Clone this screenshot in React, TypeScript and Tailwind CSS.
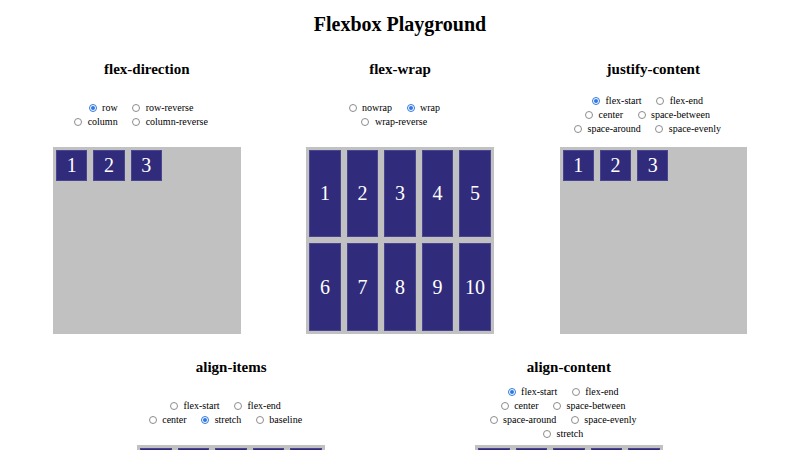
import { useState } from "react";

type Opt = { value: string; cls: string };

function Radio({ checked }: { checked: boolean }) {
  return checked ? (
    <span className="ml-[1.5px] flex h-[8px] w-[8px] shrink-0 items-center justify-center rounded-full border border-[#2f78e4] bg-white">
      <span className="h-[4px] w-[4px] rounded-full bg-[#2f78e4]" />
    </span>
  ) : (
    <span className="ml-[1.5px] h-[8px] w-[8px] shrink-0 rounded-full border border-[#8d8d8d] bg-white" />
  );
}

function Options({
  rows,
  value,
  onChange,
}: {
  rows: Opt[][];
  value: string;
  onChange: (v: string) => void;
}) {
  return (
    <div className="mt-[9px] flex h-[56px] w-full flex-col justify-center">
      {rows.map((row, i) => (
        <div key={i} className="flex justify-center leading-[14px]">
          {row.map((o) => (
            <label
              key={o.value}
              className="mr-[13px] flex cursor-pointer items-center gap-[5.5px] text-[10px] text-black"
              onClick={() => onChange(o.value)}
            >
              <Radio checked={value === o.value} />
              <span>{o.value}</span>
            </label>
          ))}
        </div>
      ))}
    </div>
  );
}

function Item({ n, className }: { n: number; className: string }) {
  return (
    <div
      className={`m-[3px] flex shrink-0 items-center justify-center border border-[#4a4590] bg-[#312b7b] text-[20px] leading-[23px] text-white ${className}`}
    >
      {n}
    </div>
  );
}

function Section({
  title,
  rows,
  value,
  onChange,
  boxClass,
  children,
}: {
  title: string;
  rows: Opt[][];
  value: string;
  onChange: (v: string) => void;
  boxClass: string;
  children: React.ReactNode;
}) {
  return (
    <section className="flex w-[213px] flex-col items-center pt-[25px]">
      <h2 className="text-[15px] font-bold leading-[17px] text-black">{title}</h2>
      <Options rows={rows} value={value} onChange={onChange} />
      <div
        className={`mt-[3.5px] flex h-[187.5px] w-[187.5px] bg-[#c2c1c2] ${boxClass}`}
      >
        {children}
      </div>
    </section>
  );
}

const dirRows: Opt[][] = [
  [
    { value: "row", cls: "flex-row" },
    { value: "row-reverse", cls: "flex-row-reverse" },
  ],
  [
    { value: "column", cls: "flex-col" },
    { value: "column-reverse", cls: "flex-col-reverse" },
  ],
];

const wrapRows: Opt[][] = [
  [
    { value: "nowrap", cls: "flex-nowrap" },
    { value: "wrap", cls: "flex-wrap" },
  ],
  [{ value: "wrap-reverse", cls: "flex-wrap-reverse" }],
];

const justifyRows: Opt[][] = [
  [
    { value: "flex-start", cls: "justify-start" },
    { value: "flex-end", cls: "justify-end" },
  ],
  [
    { value: "center", cls: "justify-center" },
    { value: "space-between", cls: "justify-between" },
  ],
  [
    { value: "space-around", cls: "justify-around" },
    { value: "space-evenly", cls: "justify-evenly" },
  ],
];

const alignItemsRows: Opt[][] = [
  [
    { value: "flex-start", cls: "items-start" },
    { value: "flex-end", cls: "items-end" },
  ],
  [
    { value: "center", cls: "items-center" },
    { value: "stretch", cls: "items-stretch" },
    { value: "baseline", cls: "items-baseline" },
  ],
];

const alignContentRows: Opt[][] = [
  [
    { value: "flex-start", cls: "content-start" },
    { value: "flex-end", cls: "content-end" },
  ],
  [
    { value: "center", cls: "content-center" },
    { value: "space-between", cls: "content-between" },
  ],
  [
    { value: "space-around", cls: "content-around" },
    { value: "space-evenly", cls: "content-evenly" },
  ],
  [{ value: "stretch", cls: "content-stretch" }],
];

function clsOf(rows: Opt[][], v: string) {
  for (const r of rows) for (const o of r) if (o.value === v) return o.cls;
  return "";
}

export default function App() {
  const [dir, setDir] = useState("row");
  const [wrap, setWrap] = useState("wrap");
  const [justify, setJustify] = useState("flex-start");
  const [alignItems, setAlignItems] = useState("stretch");
  const [alignContent, setAlignContent] = useState("flex-start");

  const three = [1, 2, 3];
  const five = [1, 2, 3, 4, 5];
  const ten = [1, 2, 3, 4, 5, 6, 7, 8, 9, 10];

  return (
    <div className="min-h-screen w-full bg-white font-['Liberation_Serif','Times_New_Roman',serif] text-black">
      <h1 className="pt-[13px] text-center text-[20px] font-bold leading-[23px]">
        Flexbox Playground
      </h1>
      <div className="flex flex-wrap justify-evenly">
        <Section
          title="flex-direction"
          rows={dirRows}
          value={dir}
          onChange={setDir}
          boxClass={clsOf(dirRows, dir)}
        >
          {three.map((n) => (
            <Item key={n} n={n} className="h-[31.25px] w-[31.25px]" />
          ))}
        </Section>
        <Section
          title="flex-wrap"
          rows={wrapRows}
          value={wrap}
          onChange={setWrap}
          boxClass={clsOf(wrapRows, wrap)}
        >
          {ten.map((n) => (
            <Item key={n} n={n} className="w-[31.5px]" />
          ))}
        </Section>
        <Section
          title="justify-content"
          rows={justifyRows}
          value={justify}
          onChange={setJustify}
          boxClass={clsOf(justifyRows, justify)}
        >
          {three.map((n) => (
            <Item key={n} n={n} className="h-[31.25px] w-[31.25px]" />
          ))}
        </Section>
        <Section
          title="align-items"
          rows={alignItemsRows}
          value={alignItems}
          onChange={setAlignItems}
          boxClass={clsOf(alignItemsRows, alignItems)}
        >
          {five.map((n) => (
            <Item key={n} n={n} className="w-[31.5px]" />
          ))}
        </Section>
        <Section
          title="align-content"
          rows={alignContentRows}
          value={alignContent}
          onChange={setAlignContent}
          boxClass={`flex-wrap ${clsOf(alignContentRows, alignContent)}`}
        >
          {ten.map((n) => (
            <Item key={n} n={n} className="w-[31.5px]" />
          ))}
        </Section>
      </div>
    </div>
  );
}
